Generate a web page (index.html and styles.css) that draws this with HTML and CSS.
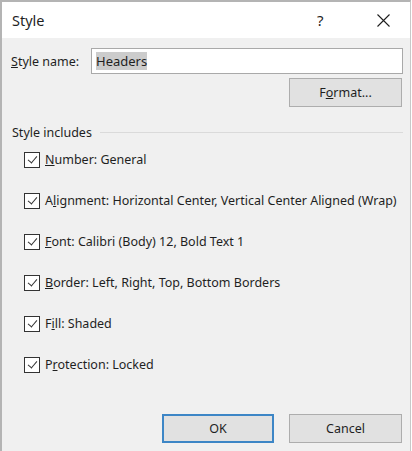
FILE: index.html
```html
<!DOCTYPE html>
<html lang="en">
	<head>
		<meta charset="utf-8" />
		<title>Style</title>
		<link rel="stylesheet" href="styles.css">
	</head>
	<body>
		<div class="dialog">
			<div class="titleBar">
				<span class="title">Style</span>
				<span class="help">?</span>
				<span class="close">
					<svg width="13" height="13" viewBox="0 0 13 13">
						<path d="M0.5 0.5 L12.5 12.5 M12.5 0.5 L0.5 12.5" stroke="#1e1e1e" stroke-width="1.1" fill="none"/>
					</svg>
				</span>
			</div>

			<div class="content">
				<div class="nameRow">
					<label class="nameLabel"><u>S</u>tyle name:</label>
					<div class="nameInput"><span class="selected">Headers</span></div>
				</div>
				<div class="formatRow">
					<button class="btn">F<u>o</u>rmat...</button>
				</div>

				<div class="groupHead">
					<span>Style includes</span>
					<div class="groupLine"></div>
				</div>

				<ul class="checks">
					<li><span class="box"></span><span class="text"><u>N</u>umber: General</span></li>
					<li><span class="box"></span><span class="text">A<u>l</u>ignment: Horizontal Center, Vertical Center Aligned (Wrap)</span></li>
					<li><span class="box"></span><span class="text"><u>F</u>ont: Calibri (Body) 12, Bold Text 1</span></li>
					<li><span class="box"></span><span class="text"><u>B</u>order: Left, Right, Top, Bottom Borders</span></li>
					<li><span class="box"></span><span class="text">F<u>i</u>ll: Shaded</span></li>
					<li><span class="box"></span><span class="text">P<u>r</u>otection: Locked</span></li>
				</ul>

				<div class="footer">
					<button class="btn okBtn">OK</button>
					<button class="btn">Cancel</button>
				</div>
			</div>
		</div>
	</body>
</html>
```

FILE: styles.css
```css
*{
	padding:0;
	margin:0;
	list-style: none;
	box-sizing: border-box;
}
body {
	background-color: #fff;
	font-family: "Noto Sans", "Liberation Sans", sans-serif;
	font-size: 12.5px;
	color: #1f1f1f;
}
.dialog {
	width: 411px;
	height: 451px;
	border-top: 2px solid #b4b4b4;
	border-left: 2px solid #b4b4b4;
	border-right: 1px solid #c8c8c8;
	background-color: #f0f0f0;
	display: flex;
	flex-direction: column;
}
.titleBar {
	height: 36px;
	background-color: #fff;
	display: flex;
	align-items: center;
	padding-left: 10px;
}
.title {
	font-size: 14.5px;
	flex: 1;
}
.help {
	font-size: 15px;
	width: 12px;
	margin-right: 48px;
}
.close {
	display: flex;
	margin-right: 20px;
}
.content {
	flex: 1;
	display: flex;
	flex-direction: column;
	padding: 0 7px 8px 9px;
}
.nameRow {
	display: flex;
	align-items: center;
	margin-top: 10px;
}
.nameLabel {
	width: 80px;
	font-size: 12.5px;
}
.nameInput {
	flex: 1;
	height: 26px;
	border: 1px solid #a9a9a9;
	background-color: #fff;
	display: flex;
	align-items: center;
	padding-left: 4px;
	font-size: 13px;
}
.selected {
	background-color: #cccccc;
	line-height: 18px;
}
.formatRow {
	display: flex;
	justify-content: flex-end;
	margin-top: 4px;
	padding-right: 1px;
}
.btn {
	width: 113px;
	height: 29px;
	background-color: #e1e1e1;
	border: 1px solid #adadad;
	font-family: inherit;
	font-size: 12.5px;
	color: #1f1f1f;
}
.groupHead {
	display: flex;
	align-items: center;
	height: 18px;
	margin-top: 16px;
	padding-left: 1px;
}
.groupLine {
	flex: 1;
	height: 1px;
	background-color: #dadada;
	margin-left: 8px;
}
.checks {
	margin-top: -2px;
}
.checks li {
	height: 41px;
	display: flex;
	align-items: center;
	padding-left: 13px;
}
.text {
	white-space: nowrap;
}
.box {
	width: 16px;
	height: 16px;
	border: 1px solid #333;
	background-color: #fff;
	margin-right: 5px;
	position: relative;
	flex-shrink: 0;
}
.box::after {
	content: "";
	position: absolute;
	left: 4.5px;
	top: 1.5px;
	width: 4px;
	height: 8px;
	border-right: 1.3px solid #333;
	border-bottom: 1.3px solid #333;
	transform: rotate(40deg);
}
.footer {
	margin-top: auto;
	display: flex;
	justify-content: flex-end;
	gap: 15px;
	padding-right: 1px;
}
.okBtn {
	width: 112px;
	border: 2px solid #3d86c6;
}
```
